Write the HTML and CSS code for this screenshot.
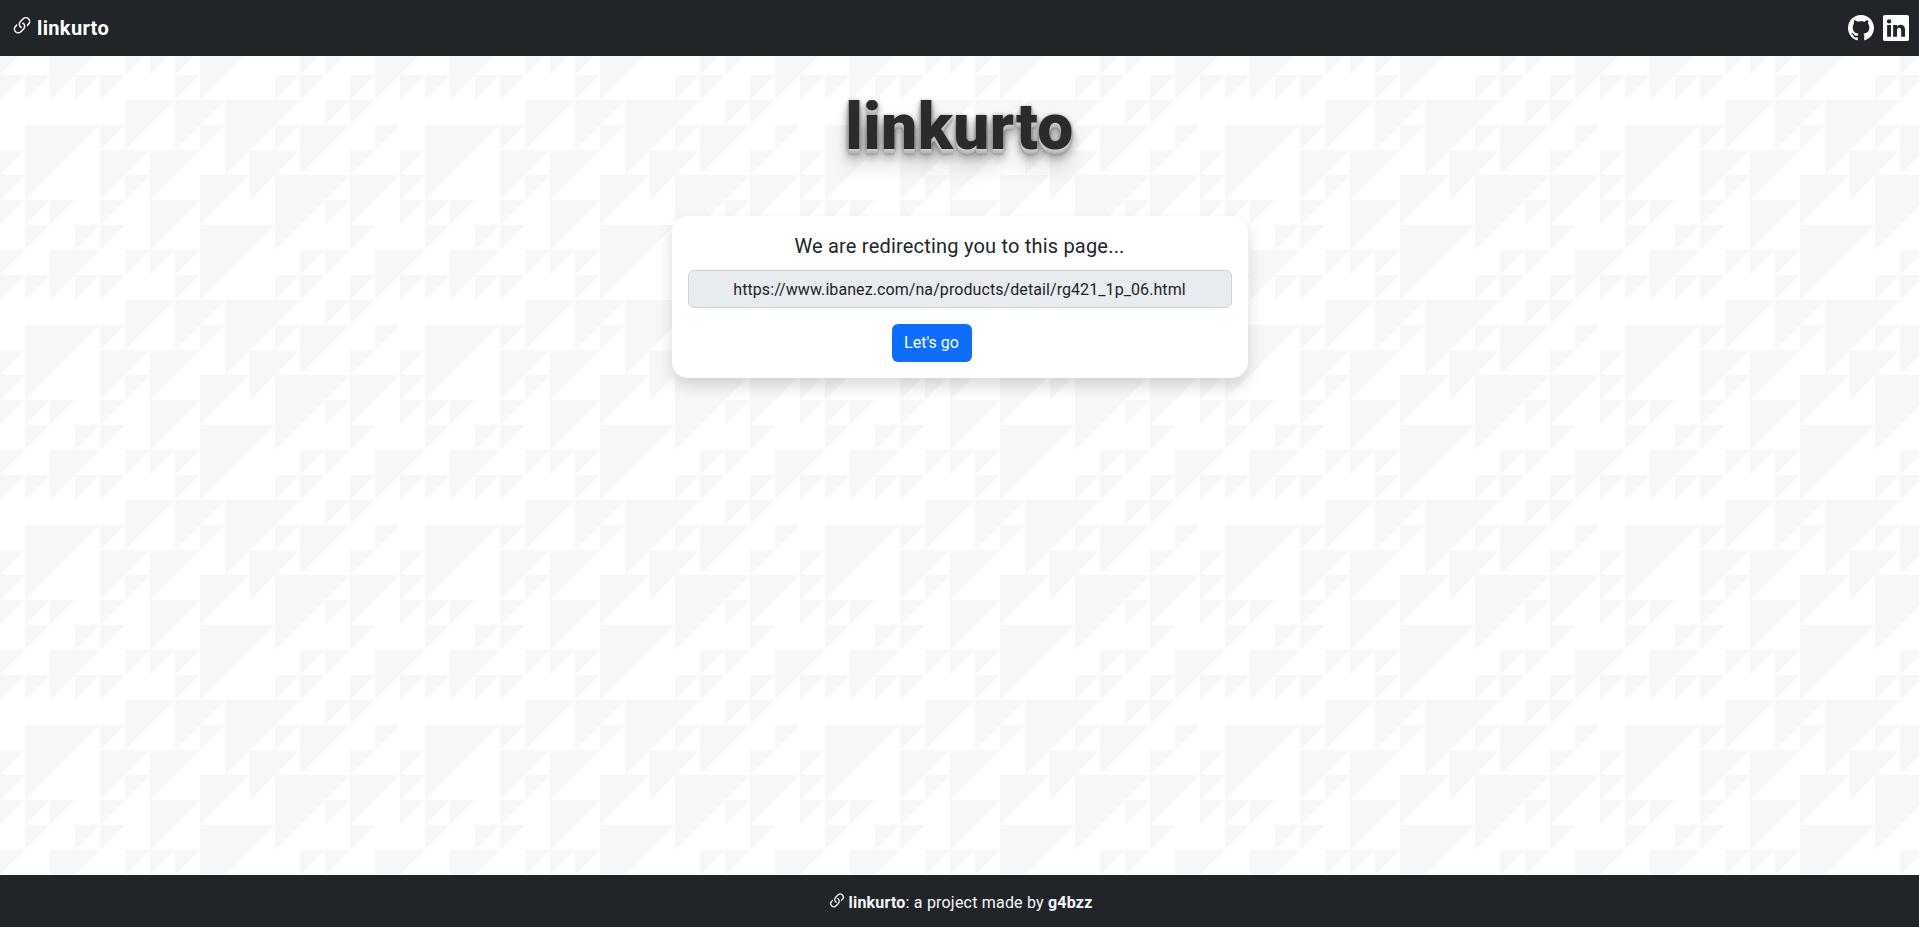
FILE: index.html
```html
<!DOCTYPE html>
<html lang="en">
<head>
<meta charset="utf-8">
<title>linkurto</title>
<link rel="stylesheet" href="styles.css">
</head>
<body>
<header class="navbar">
  <a class="brand" href="#">
    <svg class="icon-link" viewBox="0 0 16 16" fill="currentColor"><path d="M4.715 6.542 3.343 7.914a3 3 0 1 0 4.243 4.243l1.828-1.829A3 3 0 0 0 8.586 5.5L8 6.086a1.002 1.002 0 0 0-.154.199 2 2 0 0 1 .861 3.337L6.88 11.45a2 2 0 1 1-2.83-2.83l.793-.792a4.018 4.018 0 0 1-.128-1.287z"/><path d="M6.586 4.672A3 3 0 0 0 7.414 9.5l.775-.776a2 2 0 0 1-.896-3.346L9.12 3.55a2 2 0 1 1 2.83 2.83l-.793.792c.112.42.155.855.128 1.287l1.372-1.372a3 3 0 1 0-4.243-4.243L6.586 4.672z"/></svg>
    <span>linkurto</span>
  </a>
  <nav class="social">
    <a href="#"><svg class="icon-social" viewBox="0 0 16 16" fill="currentColor"><path d="M8 0C3.58 0 0 3.58 0 8c0 3.54 2.29 6.53 5.47 7.59.4.07.55-.17.55-.38 0-.19-.01-.82-.01-1.49-2.01.37-2.53-.49-2.69-.94-.09-.23-.48-.94-.82-1.13-.28-.15-.68-.52-.01-.53.63-.01 1.08.58 1.23.82.72 1.21 1.87.87 2.33.66.07-.52.28-.87.51-1.07-1.78-.2-3.64-.89-3.64-3.95 0-.87.31-1.59.82-2.15-.08-.2-.36-1.02.08-2.12 0 0 .67-.21 2.2.82.64-.18 1.32-.27 2-.27.68 0 1.36.09 2 .27 1.53-1.04 2.2-.82 2.2-.82.44 1.1.16 1.92.08 2.12.51.56.82 1.27.82 2.15 0 3.07-1.87 3.75-3.65 3.95.29.25.54.73.54 1.48 0 1.07-.01 1.93-.01 2.2 0 .21.15.46.55.38A8.012 8.012 0 0 0 16 8c0-4.42-3.58-8-8-8z"/></svg></a>
    <a href="#"><svg class="icon-social" viewBox="0 0 16 16" fill="currentColor"><path d="M0 1.146C0 .513.526 0 1.175 0h13.65C15.474 0 16 .513 16 1.146v13.708c0 .633-.526 1.146-1.175 1.146H1.175C.526 16 0 15.487 0 14.854V1.146zm4.943 12.248V6.169H2.542v7.225h2.401zm-1.2-8.212c.837 0 1.358-.554 1.358-1.248-.015-.709-.52-1.248-1.342-1.248-.822 0-1.359.54-1.359 1.248 0 .694.521 1.248 1.327 1.248h.016zm4.908 8.212V9.359c0-.216.016-.432.08-.586.173-.431.568-.878 1.232-.878.869 0 1.216.662 1.216 1.634v3.865h2.401V9.25c0-2.22-1.184-3.252-2.764-3.252-1.274 0-1.845.7-2.165 1.193v.025h-.016a5.54 5.54 0 0 1 .016-.025V6.169h-2.4c.03.678 0 7.225 0 7.225h2.4z"/></svg></a>
  </nav>
</header>
<main class="content">
  <h1 class="title">linkurto</h1>
  <section class="card">
    <h5 class="card-title">We are redirecting you to this page...</h5>
    <div class="url-box">https://www.ibanez.com/na/products/detail/rg421_1p_06.html</div>
    <div class="actions"><a class="btn" href="#">Let's go</a></div>
  </section>
</main>
<footer class="footer">
  <svg class="icon-foot" viewBox="0 0 16 16" fill="currentColor"><path d="M4.715 6.542 3.343 7.914a3 3 0 1 0 4.243 4.243l1.828-1.829A3 3 0 0 0 8.586 5.5L8 6.086a1.002 1.002 0 0 0-.154.199 2 2 0 0 1 .861 3.337L6.88 11.45a2 2 0 1 1-2.83-2.83l.793-.792a4.018 4.018 0 0 1-.128-1.287z"/><path d="M6.586 4.672A3 3 0 0 0 7.414 9.5l.775-.776a2 2 0 0 1-.896-3.346L9.12 3.55a2 2 0 1 1 2.83 2.83l-.793.792c.112.42.155.855.128 1.287l1.372-1.372a3 3 0 1 0-4.243-4.243L6.586 4.672z"/></svg>
  <span><b>linkurto</b>: a project made by <b>g4bzz</b></span>
</footer>
</body>
</html>
```
FILE: styles.css
```css
* { box-sizing: border-box; }
html { background: #fff; }
body {
  margin: 0;
  min-height: 927px;
  display: flex;
  flex-direction: column;
  font-family: Roboto, "Noto Sans", sans-serif;
  font-size: 16px;
  line-height: 1.5;
  color: #212529;
}
a { color: inherit; text-decoration: none; }
.navbar {
  height: 56px;
  background: #212529;
  color: #fff;
  display: flex;
  align-items: center;
  justify-content: space-between;
  padding: 0 10px;
}
.brand {
  display: flex;
  align-items: center;
  gap: 3px;
  font-size: 20px;
  font-weight: 700;
  letter-spacing: .35px;
}
.icon-link { width: 24px; height: 24px; margin-top: -5px; }
.social { display: flex; gap: 9px; }
.social a { display: block; height: 26px; }
.icon-social { width: 26px; height: 26px; display: block; }
.content {
  flex: 1;
  display: flex;
  flex-direction: column;
  align-items: center;
  background-color: #fff;
  background-image: url("data:image/svg+xml,%3Csvg xmlns='http://www.w3.org/2000/svg' width='400' height='200' viewBox='0 0 16 8'%3E%3Cpath fill='%23f7f7f7' d='M15 2h2l-2 2zM-1 2h2l-2 2zM2 2h2l-2 2zM5 2h1l-1 1zM6 2h1l-1 1zM7 2h1l-1 1zM12 2h1l-1 1zM13 2h1l-1 1zM8 1h3l-3 3zM0 3h1l-1 1zM16 3h1l-1 1zM1 3h1l-1 1zM3 3h1l-1 1zM4 3h1l-1 1zM7 3h1l-1 1zM11 3h1l-1 1zM12 3h1l-1 1zM14 3h1l-1 1zM5 4h2l-2 2zM7 4h2l-2 2zM9 4h3l-3 3zM13 4h1l-1 1zM14 4h1l-1 1zM1 5h3l-3 3zM4 5h1l-1 1zM8 5h1l-1 1zM11 5h1l-1 1zM12 5h2l-2 2zM15 5h1l-1 1zM0 6h1l-1 1zM4 6h2l-2 2zM6 6h2l-2 2zM10 6h2l-2 2zM14 6h1l-1 1zM0 7h1l-1 1zM5 7h1l-1 1zM8 7h2l-2 2zM8 -1h2l-2 2zM11 7h3l-3 3zM11 -1h3l-3 3zM14 7h2l-2 2zM14 -1h2l-2 2zM0 0h1l-1 1zM1 0h1l-1 1zM2 0h1l-1 1zM4 0h1l-1 1zM6 0h2l-2 2zM13 0h1l-1 1zM1 1h1l-1 1zM3 1h1l-1 1zM4 1h1l-1 1zM14 1h1l-1 1z'/%3E%3C/svg%3E");
  background-position: 0 -56px;
}
.title {
  margin: 24px 0 0;
  font-size: 64px;
  font-weight: 900;
  line-height: 96px;
  height: 136px;
  color: #2b2b2b;
  letter-spacing: .4px;
  text-shadow: 0 1px 0 #ccc, 0 2px 0 #c9c9c9, 0 3px 0 #bbb, 0 4px 0 #b9b9b9, 0 5px 0 #aaa,
    0 6px 1px rgba(0,0,0,.1), 0 0 5px rgba(0,0,0,.1), 0 1px 3px rgba(0,0,0,.3),
    0 3px 5px rgba(0,0,0,.2), 0 5px 10px rgba(0,0,0,.25), 0 10px 10px rgba(0,0,0,.2),
    0 20px 20px rgba(0,0,0,.15);
}
.card {
  width: 576px;
  height: 162px;
  padding: 16px;
  background: #fff;
  border-radius: 16px;
  box-shadow: 0 8px 16px rgba(0,0,0,.15);
}
.card-title {
  margin: 0 0 14px;
  padding-top: 2px;
  height: 24px;
  font-size: 20px;
  font-weight: 400;
  line-height: 24px;
  text-align: center;
  letter-spacing: .2px;
}
.url-box {
  height: 38px;
  background: #e9ecef;
  border: 1px solid #ced4da;
  border-radius: 6px;
  text-align: center;
  line-height: 38px;
  letter-spacing: .08px;
}
.actions { display: flex; justify-content: center; margin-top: 16px; }
.btn {
  width: 80px;
  height: 38px;
  margin-right: 56px;
  background: #0d6efd;
  color: #fff;
  border-radius: 6px;
  text-align: center;
  line-height: 38px;
}
.footer {
  height: 52px;
  padding-top: 4px;
  background: #212529;
  color: #f8f9fa;
  display: flex;
  align-items: center;
  justify-content: center;
  gap: 2px;
  letter-spacing: .2px;
}
.icon-foot { width: 20px; height: 20px; margin-top: -5px; }
.footer b { font-weight: 700; }
```
